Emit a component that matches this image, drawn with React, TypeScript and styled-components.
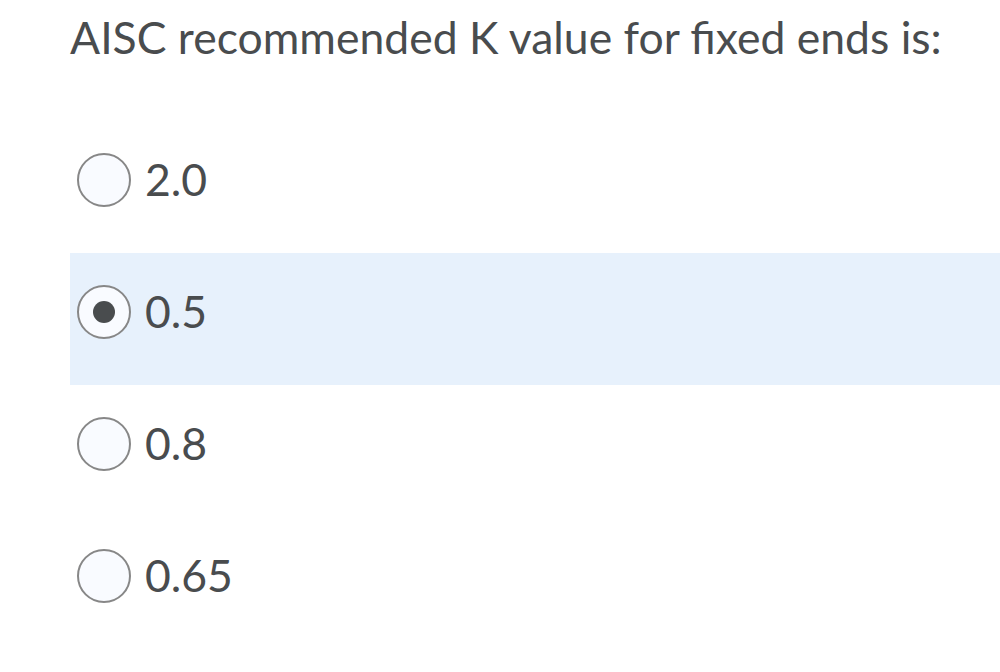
import styled, { createGlobalStyle } from 'styled-components'

const options = [
  { label: '2.0', checked: false },
  { label: '0.5', checked: true },
  { label: '0.8', checked: false },
  { label: '0.65', checked: false },
]

export default function App() {
  return (
    <Page>
      <Global />
      <Question>AISC recommended K value for fixed ends is:</Question>
      <OptionList>
        {options.map((o) => (
          <Option key={o.label} $selected={o.checked}>
            <Radio $checked={o.checked} />
            <Label>{o.label}</Label>
          </Option>
        ))}
      </OptionList>
    </Page>
  )
}

const Global = createGlobalStyle`
  html, body {
    margin: 0;
    padding: 0;
    background: #ffffff;
    overflow: hidden;
  }
`
const Page = styled.div`
  width: 1000px;
  height: 672px;
  padding-left: 70px;
  box-sizing: border-box;
  font-family: Lato, "Noto Sans", sans-serif;
  color: #494c4e;
`
const Question = styled.div`
  font-size: 44.5px;
  line-height: 53px;
  padding-top: 10px;
  height: 104px;
  box-sizing: border-box;
  white-space: nowrap;
`
const OptionList = styled.div`
  display: flex;
  flex-direction: column;
  padding-top: 17px;
`
const Option = styled.div<{ $selected: boolean }>`
  display: flex;
  align-items: center;
  height: 132px;
  padding-left: 7px;
  padding-bottom: 15px;
  box-sizing: border-box;
  background: ${(p) => (p.$selected ? '#e7f1fc' : 'transparent')};
`
const Radio = styled.span<{ $checked: boolean }>`
  width: 54px;
  height: 54px;
  box-sizing: border-box;
  border-radius: 50%;
  border: 2px solid #878787;
  background: #f9fbff;
  display: flex;
  align-items: center;
  justify-content: center;
  flex-shrink: 0;
  &::after {
    content: '';
    display: ${(p) => (p.$checked ? 'block' : 'none')};
    width: 22px;
    height: 22px;
    border-radius: 50%;
    background: #494c4e;
  }
`
const Label = styled.span`
  font-size: 44.5px;
  line-height: 53px;
  margin-left: 14px;
  margin-top: -2px;
`
